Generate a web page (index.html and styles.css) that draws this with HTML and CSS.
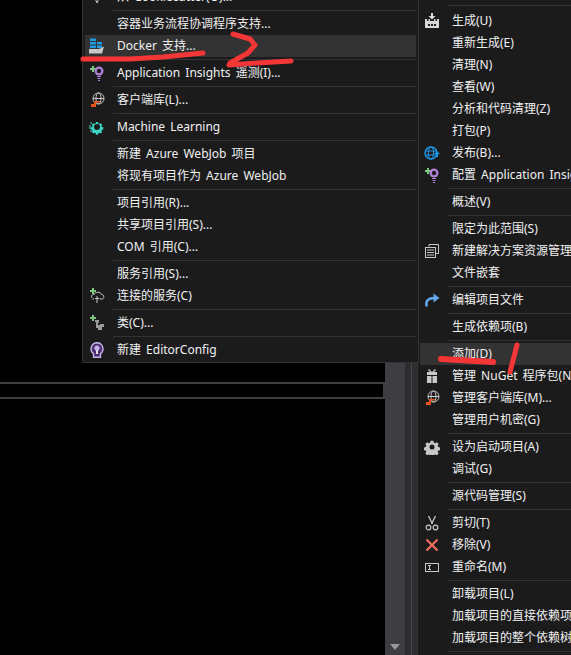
FILE: index.html
```html
<!DOCTYPE html>
<html lang="zh-CN">
<head>
<meta charset="utf-8">
<title>上下文菜单</title>
<link rel="stylesheet" href="styles.css">
</head>
<body>
<div class="stage">
  <div class="editor">
    <div class="outline-box"></div>
  </div>
  <div class="scroll">
    <div class="scroll-track"><svg class="arrow" width="10" height="6" viewBox="0 0 10 6"><path d="M0 0h10L5 6z" fill="#999"/></svg></div>
    <div class="scroll-gap"></div>
    <div class="scroll-line"></div>
    <div class="scroll-gap small"></div>
  </div>

  <div class="menu main">
    <div class="sep"></div>
    <div class="row"><span class="ico"><svg width="16" height="16" viewBox="0 0 16 16"><path d="M7 0h2v3h2.500L8 6.500 4.500 3H7z" fill="#d8d8d8"/><path d="M1 6h2v2h1.500V6H6v2h4V6h1.500v2H13V6h2v9H1z" fill="#d8d8d8"/><path d="M4 11h2v2H4zM7 11h2v2H7zM10 11h2v2h-2z" fill="#1b1b1c"/></svg></span><span class="txt">生成(U)</span></div>
    <div class="row"><span class="ico"></span><span class="txt">重新生成(E)</span></div>
    <div class="row"><span class="ico"></span><span class="txt">清理(N)</span></div>
    <div class="row"><span class="ico"></span><span class="txt">查看(W)</span></div>
    <div class="row"><span class="ico"></span><span class="txt">分析和代码清理(Z)</span></div>
    <div class="row"><span class="ico"></span><span class="txt">打包(P)</span></div>
    <div class="row"><span class="ico"><svg width="16" height="16" viewBox="0 0 16 16"><circle cx="7" cy="8" r="6" fill="none" stroke="#1c97ea" stroke-width="1.4"/><ellipse cx="7" cy="8" rx="2.600" ry="6" fill="none" stroke="#1c97ea"/><path d="M1 6h12M1 10h12" stroke="#1c97ea"/><path d="M13 6l3 3h-2v3h-2V9h-2z" fill="#1c97ea"/></svg></span><span class="txt">发布(B)...</span></div>
    <div class="row"><span class="ico"><svg width="16" height="16" viewBox="0 0 16 16"><path d="M3 1v2H1v2h2v2h2V5h2V3H5V1z" fill="#7ec77e"/><circle cx="10" cy="6" r="4.500" fill="#b180d7"/><circle cx="10" cy="6" r="2.200" fill="#1b1b1c"/><path d="M8 11h4v1H8zM8.500 13h3v1h-3zM9 15h2v1H9z" fill="#b180d7"/></svg></span><span class="txt">配置 Application Insights...</span></div>
    <div class="sep"></div>
    <div class="row"><span class="ico"></span><span class="txt">概述(V)</span></div>
    <div class="sep"></div>
    <div class="row"><span class="ico"></span><span class="txt">限定为此范围(S)</span></div>
    <div class="row"><span class="ico"><svg width="16" height="16" viewBox="0 0 16 16"><path d="M5 3.500V1.500h9.500v9H12" fill="none" stroke="#c8c8c8"/><rect x="1.500" y="4.500" width="10" height="10" fill="#1b1b1c" stroke="#c8c8c8"/><path d="M3 7h7M3 9.500h7M3 12h7" stroke="#c8c8c8"/></svg></span><span class="txt">新建解决方案资源管理器视图</span></div>
    <div class="row"><span class="ico"></span><span class="txt">文件嵌套</span></div>
    <div class="sep"></div>
    <div class="row"><span class="ico"><svg width="16" height="16" viewBox="0 0 16 16"><path d="M2.500 13.500C1.500 8.500 5 6 10 6" fill="none" stroke="#62a8ea" stroke-width="2.600" stroke-linecap="round"/><path d="M9.500 1.500l6 4.500-6 4.500z" fill="#62a8ea"/></svg></span><span class="txt">编辑项目文件</span></div>
    <div class="sep"></div>
    <div class="row"><span class="ico"></span><span class="txt">生成依赖项(B)</span></div>
    <div class="sep"></div>
    <div class="row active"><span class="ico"></span><span class="txt">添加(D)</span></div>
    <div class="row"><span class="ico"><svg width="16" height="16" viewBox="0 0 16 16"><path d="M5 1l3 3 3-3 1 1-2 2h3v3H3V4h3L4 2zM3 8h4.500v7H3zM8.500 8H13v7H8.500z" fill="#c8c8c8"/></svg></span><span class="txt">管理 NuGet 程序包(N)...</span></div>
    <div class="row"><span class="ico"><svg width="16" height="16" viewBox="0 0 16 16"><circle cx="9.500" cy="6.500" r="5.500" fill="none" stroke="#c8c8c8"/><ellipse cx="9.500" cy="6.500" rx="2.500" ry="5.500" fill="none" stroke="#c8c8c8"/><path d="M4 6.500h11" stroke="#c8c8c8"/><path d="M5 9h6v1.500H7V15H2v-3h3z" fill="#e8581c"/></svg></span><span class="txt">管理客户端库(M)...</span></div>
    <div class="row"><span class="ico"></span><span class="txt">管理用户机密(G)</span></div>
    <div class="sep"></div>
    <div class="row"><span class="ico"><svg width="16" height="16" viewBox="0 0 16 16"><path d="M6.500 1h3l.4 2 1.700.7 1.700-1.100 2.100 2.100-1.100 1.700.7 1.700 2 .4v3l-2 .4-.7 1.700 1.100 1.700-2.100 2.100-1.700-1.100-1.700.7-.4 2h-3l-.4-2-1.700-.7-1.700 1.100-2.100-2.100 1.100-1.700-.7-1.700-2-.4v-3l2-.4.7-1.700-1.100-1.700 2.100-2.100 1.700 1.100 1.700-.7z" transform="translate(.8 .8) scale(.9)" fill="#c8c8c8"/><circle cx="8" cy="8" r="2.500" fill="#1b1b1c"/></svg></span><span class="txt">设为启动项目(A)</span></div>
    <div class="row"><span class="ico"></span><span class="txt">调试(G)</span></div>
    <div class="sep"></div>
    <div class="row"><span class="ico"></span><span class="txt">源代码管理(S)</span></div>
    <div class="sep"></div>
    <div class="row"><span class="ico"><svg width="16" height="16" viewBox="0 0 16 16"><path d="M4.500 1L8.500 9M11.500 1L7.500 9" fill="none" stroke="#c8c8c8" stroke-width="1.300"/><circle cx="4.500" cy="12.500" r="2.300" fill="none" stroke="#c8c8c8" stroke-width="1.200"/><circle cx="11.500" cy="12.500" r="2.300" fill="none" stroke="#c8c8c8" stroke-width="1.200"/></svg></span><span class="txt">剪切(T)</span></div>
    <div class="row"><span class="ico"><svg width="16" height="16" viewBox="0 0 16 16"><path d="M2.500 2.500l11 11M13.500 2.500l-11 11" stroke="#f1705c" stroke-width="2.200"/></svg></span><span class="txt">移除(V)</span></div>
    <div class="row"><span class="ico"><svg width="16" height="16" viewBox="0 0 16 16"><rect x="1.500" y="4.500" width="13" height="8" fill="none" stroke="#c8c8c8"/><path d="M4 6.500h3M4 10.500h3M5.500 6.500v4" stroke="#c8c8c8"/></svg></span><span class="txt">重命名(M)</span></div>
    <div class="sep"></div>
    <div class="row"><span class="ico"></span><span class="txt">卸载项目(L)</span></div>
    <div class="row"><span class="ico"></span><span class="txt">加载项目的直接依赖项</span></div>
    <div class="row"><span class="ico"></span><span class="txt">加载项目的整个依赖树</span></div>
    <div class="sep"></div>
  </div>

  <div class="menu sub">
    <div class="row"><span class="ico"><svg width="16" height="16" viewBox="0 0 16 16"><path d="M3 2l5 12 5-12" fill="none" stroke="#c8c8c8"/></svg></span><span class="txt">从 Cookiecutter(O)...</span></div>
    <div class="sep"></div>
    <div class="row"><span class="ico"></span><span class="txt">容器业务流程协调程序支持...</span></div>
    <div class="row active"><span class="ico"><svg width="16" height="16" viewBox="0 0 16 16"><path d="M1 .5h6V3H1zM1 4h6v2.500H1zM1 7.500h6V10H1zM8 4h5v2.500H8zM8 7.500h5V10H8z" fill="#1f9be0"/><path d="M0 15.500V11h10l5-2.500-2 7z" fill="#c8c8c8"/></svg></span><span class="txt">Docker 支持...</span></div>
    <div class="sep"></div>
    <div class="row"><span class="ico"><svg width="16" height="16" viewBox="0 0 16 16"><path d="M3 1v2H1v2h2v2h2V5h2V3H5V1z" fill="#7ec77e"/><circle cx="10" cy="6" r="4.500" fill="#b180d7"/><circle cx="10" cy="6" r="2.200" fill="#1b1b1c"/><path d="M8 11h4v1H8zM8.500 13h3v1h-3zM9 15h2v1H9z" fill="#b180d7"/></svg></span><span class="txt">Application Insights 遥测(I)...</span></div>
    <div class="sep"></div>
    <div class="row"><span class="ico"><svg width="16" height="16" viewBox="0 0 16 16"><circle cx="9.500" cy="6.500" r="5.500" fill="none" stroke="#c8c8c8"/><ellipse cx="9.500" cy="6.500" rx="2.500" ry="5.500" fill="none" stroke="#c8c8c8"/><path d="M4 6.500h11" stroke="#c8c8c8"/><path d="M5 9h6v1.500H7V15H2v-3h3z" fill="#e8581c"/></svg></span><span class="txt">客户端库(L)...</span></div>
    <div class="sep"></div>
    <div class="row"><span class="ico"><svg width="16" height="16" viewBox="0 0 16 16"><path d="M6.500 1h3l.4 2 1.700.7 1.700-1.100 2.100 2.100-1.100 1.700.7 1.700 2 .4v3l-2 .4-.7 1.700 1.100 1.700-2.100 2.100-1.700-1.100-1.700.7-.4 2h-3l-.4-2-1.700-.7-1.700 1.100-2.100-2.100 1.100-1.700-.7-1.700-2-.4v-3l2-.4.7-1.700-1.100-1.700 2.100-2.100 1.700 1.100 1.700-.7z" transform="translate(2.400 2.400) scale(.7)" fill="#3bd6c6"/><circle cx="8" cy="8" r="3" fill="#1b1b1c"/><path d="M0 7h2M0 9h2M1 4h2M1 12h2" stroke="#3bd6c6"/></svg></span><span class="txt">Machine Learning</span></div>
    <div class="sep"></div>
    <div class="row"><span class="ico"></span><span class="txt">新建 Azure WebJob 项目</span></div>
    <div class="row"><span class="ico"></span><span class="txt">将现有项目作为 Azure WebJob</span></div>
    <div class="sep"></div>
    <div class="row"><span class="ico"></span><span class="txt">项目引用(R)...</span></div>
    <div class="row"><span class="ico"></span><span class="txt">共享项目引用(S)...</span></div>
    <div class="row"><span class="ico"></span><span class="txt">COM 引用(C)...</span></div>
    <div class="sep"></div>
    <div class="row"><span class="ico"></span><span class="txt">服务引用(S)...</span></div>
    <div class="row"><span class="ico"><svg width="16" height="16" viewBox="0 0 16 16"><path d="M3 0v2H1v2h2v2h2V4h2V2H5V0z" fill="#7ec77e"/><path d="M3 10C1.500 8 3 6.500 5 6.500 6 3.500 12 3.500 12.500 6.500c3 0 3 4.500.5 4.500H10.500M5 11H3.500" fill="none" stroke="#c8c8c8"/><path d="M8 8v7M6 10.500h4" stroke="#c8c8c8"/></svg></span><span class="txt">连接的服务(C)</span></div>
    <div class="sep"></div>
    <div class="row"><span class="ico"><svg width="16" height="16" viewBox="0 0 16 16"><path d="M3 0v2H1v2h2v2h2V4h2V2H5V0z" fill="#7ec77e"/><path d="M6 5h4v3H9v2h2V9h4v3h-2v3H9v-2H7V7H6z" fill="#9a9a9a"/></svg></span><span class="txt">类(C)...</span></div>
    <div class="sep"></div>
    <div class="row"><span class="ico"><svg width="16" height="16" viewBox="0 0 16 16"><path d="M8 .8a6 6 0 0 0-3.500 10.800v3.600h7v-3.600A6 6 0 0 0 8 .8z" fill="#4b2f6e" stroke="#c7b3ea" stroke-width="1.400"/><circle cx="8" cy="6" r="2.600" fill="#c7b3ea"/><path d="M7 8h2v4H7z" fill="#e0e0e0"/></svg></span><span class="txt">新建 EditorConfig</span></div>
  </div>

  <svg class="marks" width="571" height="655" viewBox="0 0 571 655">
    <g fill="none" stroke="#f53636" stroke-linecap="round" stroke-linejoin="round">
      <path stroke-width="5" d="M83 59 130 59 163 57 203 53"/>
      <path stroke-width="5" d="M233 34 250 39 255 45 248 53 230 63 229 65 257 63 291 61"/>
      <path stroke-width="5" d="M517 345 510 372"/>
      <path stroke-width="6" d="M441 359 493 362"/>
    </g>
  </svg>
</div>
</body>
</html>
```
FILE: styles.css
```css
html, body {
  margin: 0;
  padding: 0;
  background: #000;
}

.stage {
  position: relative;
  display: flex;
  width: 571px;
  height: 655px;
  overflow: hidden;
  font: 12px/22px "Noto Sans", "Noto Sans CJK SC", sans-serif;
  word-spacing: 2px;
  color: #f1f1f1;
}

.editor {
  width: 385px;
  flex: none;
  padding-top: 382px;
  box-sizing: border-box;
  background: #000;
}

.outline-box {
  height: 17px;
  box-sizing: border-box;
  border: 2px solid #3f3f3f;
  border-left: 0;
}

.scroll {
  display: flex;
  flex: none;
  width: 32px;
}

.scroll-track {
  position: relative;
  width: 20px;
  background: #3e3e42;
}

.arrow {
  position: absolute;
  left: 5px;
  top: 644px;
}

.scroll-gap {
  width: 6px;
  background: #2d2d30;
}

.scroll-gap.small {
  width: 5px;
}

.scroll-line {
  width: 1px;
  background: #48484b;
}

.menu {
  box-sizing: border-box;
  background: #1b1b1c;
  border: 1px solid #333337;
  padding: 0 2px;
  white-space: nowrap;
  overflow: hidden;
}

.main {
  flex: none;
  width: 154px;
  height: 680px;
  padding: 3px 0 0 2px;
  border-top: 0;
  border-right: 0;
}

.main > .sep:first-child {
  height: 7px;
}

.sub {
  position: absolute;
  left: 82px;
  top: -15px;
  width: 337px;
  height: 378px;
}

.row {
  display: flex;
  height: 22px;
  line-height: 22px;
}

.row.active {
  background: #333334;
}

.ico {
  flex: none;
  display: flex;
  align-items: center;
  justify-content: center;
  width: 24px;
  margin-right: 8px;
}

.txt {
  flex: none;
}

.sep {
  height: 5px;
  box-sizing: border-box;
  padding-top: 2px;
  margin-left: 28px;
}

.sep::before {
  content: "";
  display: block;
  height: 1px;
  background: #333337;
}

.marks {
  position: absolute;
  left: 0;
  top: 0;
}
```
